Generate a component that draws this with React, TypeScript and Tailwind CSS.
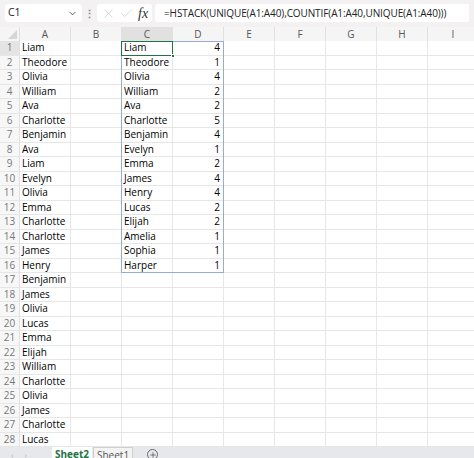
import { Check, ChevronDown, X, Plus } from "lucide-react";

const colA = [
  "Liam", "Theodore", "Olivia", "William", "Ava", "Charlotte", "Benjamin", "Ava", "Liam", "Evelyn",
  "Olivia", "Emma", "Charlotte", "Charlotte", "James", "Henry", "Benjamin", "James", "Olivia", "Lucas",
  "Emma", "Elijah", "William", "Charlotte", "Olivia", "James", "Charlotte", "Lucas",
];

const spill: [string, number][] = [
  ["Liam", 4], ["Theodore", 1], ["Olivia", 4], ["William", 2], ["Ava", 2], ["Charlotte", 5],
  ["Benjamin", 4], ["Evelyn", 1], ["Emma", 2], ["James", 4], ["Henry", 4], ["Lucas", 2],
  ["Elijah", 2], ["Amelia", 1], ["Sophia", 1], ["Harper", 1],
];

const cols = ["A", "B", "C", "D", "E", "F", "G", "H", "I"];

function FormulaBar() {
  return (
    <div className="flex h-[26px] items-center bg-[#f3f1f1] px-[5px]">
      <div className="flex h-[18px] w-[77px] shrink-0 items-center justify-between rounded-[3px] bg-white pl-[3px] pr-[4px]">
        <span className="text-[10.5px] text-[#222]">C1</span>
        <ChevronDown size={11} strokeWidth={2} className="text-[#555]" />
      </div>
      <span className="ml-[2px] w-[10px] shrink-0 text-center text-[11px] leading-none font-bold text-[#888]">⋮</span>
      <div className="ml-[3px] flex h-[18px] w-[55px] shrink-0 items-center justify-around rounded-[3px] bg-white px-[2px]">
        <X size={15} strokeWidth={1} className="text-[#c4c4c4]" />
        <Check size={15} strokeWidth={1} className="text-[#c4c4c4]" />
        <span className="font-['Liberation_Serif',serif] text-[14px] italic text-[#333]">fx</span>
      </div>
      <div className="ml-[3px] flex h-[18px] flex-1 items-center rounded-l-[3px] bg-white pl-[9px]">
        <span className="text-[10px] tracking-[-0.1px] whitespace-nowrap text-[#222]">
          =HSTACK(UNIQUE(A1:A40),COUNTIF(A1:A40,UNIQUE(A1:A40)))
        </span>
      </div>
    </div>
  );
}

function HeaderRow() {
  return (
    <div className="flex h-[14px] bg-[#f5f5f5]">
      <div className="relative w-[20px] shrink-0 border-r border-[#e0e0e0]">
        <div className="absolute right-[2px] bottom-[2px] h-0 w-0 border-b-[9px] border-l-[9px] border-b-[#d6d6d6] border-l-transparent" />
      </div>
      {cols.map((c) => (
        <div
          key={c}
          className={`flex w-[51px] shrink-0 items-center justify-center border-r border-[#e0e0e0] text-[10px] text-[#555] ${
            c === "C" ? "bg-[#e1e1e1]" : ""
          }`}
        >
          {c}
        </div>
      ))}
    </div>
  );
}

function Row({ n }: { n: number }) {
  const s = spill[n - 1];
  return (
    <div className="flex h-[14.5px] border-b border-[#e6e6e6]">
      <div
        className={`flex w-[20px] shrink-0 items-center justify-center border-r border-[#e0e0e0] text-[10px] text-[#777] ${
          n === 1 ? "bg-[#e4e4e4]" : "bg-[#f7f7f7]"
        }`}
      >
        {n}
      </div>
      <div className="flex w-[51px] shrink-0 items-center border-r border-[#e8e8e8] pl-[2px] text-[10px] text-black">
        {colA[n - 1]}
      </div>
      <div className="w-[51px] shrink-0 border-r border-[#e8e8e8]" />
      <div className="flex w-[51px] shrink-0 items-center border-r border-[#e8e8e8] pl-[2px] text-[10px] text-black">
        {s ? s[0] : ""}
      </div>
      <div className="flex w-[51px] shrink-0 items-center justify-end border-r border-[#e8e8e8] pr-[3px] text-[10px] text-black">
        {s ? s[1] : ""}
      </div>
      {[0, 1, 2, 3, 4].map((i) => (
        <div key={i} className="w-[51px] shrink-0 border-r border-[#e8e8e8]" />
      ))}
    </div>
  );
}

function Tabs() {
  return (
    <div className="flex h-[12px] items-start bg-[#e6e8eb] text-[10px]">
      <div className="flex w-[52px] shrink-0 items-center gap-[11px] pt-[2px] pl-[11px] text-[8px] text-[#aaa]">
        <span>‹</span>
        <span>›</span>
      </div>
      <div className="bg-white px-[3px] pt-[1px] leading-[13px] font-bold text-[#217346]">Sheet2</div>
      <div className="ml-[1px] border-x border-t border-[#cfcfcf] bg-[#f3f3f3] px-[3px] pt-[1px] leading-[12px] text-[#555]">
        Sheet1
      </div>
      <div className="mt-[2px] ml-[14px] flex h-[11px] w-[11px] items-center justify-center rounded-full border border-[#666]">
        <Plus size={8} strokeWidth={2} className="text-[#444]" />
      </div>
    </div>
  );
}

export default function App() {
  return (
    <div className="h-[458px] w-[474px] overflow-hidden bg-white font-['Open_Sans',sans-serif]">
      <FormulaBar />
      <div className="h-[1px] bg-[#f3f1f1]" />
      <HeaderRow />
      <div className="relative">
        {colA.map((_, i) => (
          <Row key={i} n={i + 1} />
        ))}
        <div className="pointer-events-none absolute top-0 left-[121px] h-[232px] w-[103px] border border-[#94acd6]" />
        <div className="pointer-events-none absolute top-0 left-[121px] h-[15px] w-[52px] border-[1.5px] border-[#217346]">
          <div className="absolute -right-[3px] -bottom-[3px] h-[4px] w-[4px] border border-white bg-[#217346]" />
        </div>
      </div>
      <Tabs />
    </div>
  );
}
